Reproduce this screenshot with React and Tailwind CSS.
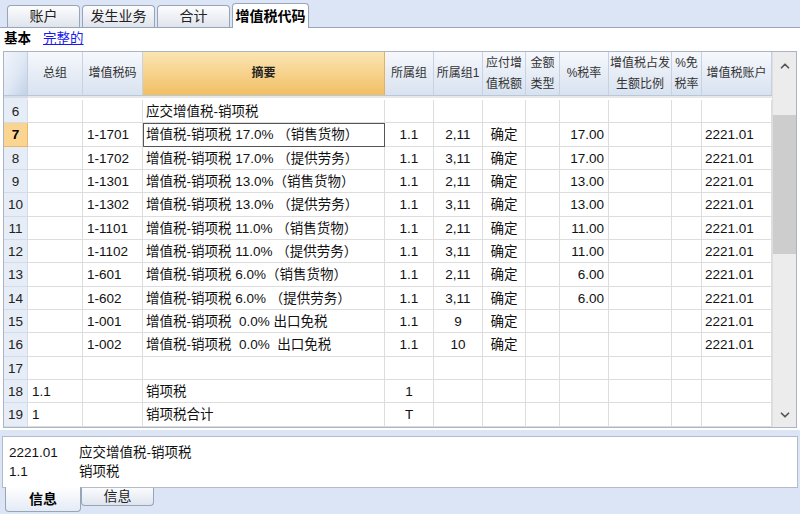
import React from "react";
import { ChevronUp, ChevronDown } from "lucide-react";

const W = [
  "w-[24px]",
  "w-[55px]",
  "w-[60px]",
  "w-[242px]",
  "w-[49px]",
  "w-[49px]",
  "w-[43px]",
  "w-[34px]",
  "w-[49px]",
  "w-[63px]",
  "w-[30px]",
  "w-[70px]",
];

const ALIGN = [
  "justify-start pl-[4px]",
  "justify-start pl-[4px]",
  "justify-start pl-[3px]",
  "justify-center",
  "justify-center",
  "justify-center",
  "justify-center",
  "justify-end pr-[4px]",
  "justify-end pr-[4px]",
  "justify-end pr-[4px]",
  "justify-start pl-[3px]",
];

const HEADERS = [
  "总组",
  "增值税码",
  "摘要",
  "所属组",
  "所属组1",
  "应付增\n值税额",
  "金额\n类型",
  "%税率",
  "增值税占发\n生额比例",
  "%免\n税率",
  "增值税账户",
];

const ROWS = [
  [6, "", "", "应交增值税-销项税", "", "", "", "", "", "", "", ""],
  [7, "", "1-1701", "增值税-销项税 17.0% （销售货物）", "1.1", "2,11", "确定", "", "17.00", "", "", "2221.01"],
  [8, "", "1-1702", "增值税-销项税 17.0% （提供劳务）", "1.1", "3,11", "确定", "", "17.00", "", "", "2221.01"],
  [9, "", "1-1301", "增值税-销项税 13.0%（销售货物）", "1.1", "2,11", "确定", "", "13.00", "", "", "2221.01"],
  [10, "", "1-1302", "增值税-销项税 13.0% （提供劳务）", "1.1", "3,11", "确定", "", "13.00", "", "", "2221.01"],
  [11, "", "1-1101", "增值税-销项税 11.0% （销售货物）", "1.1", "2,11", "确定", "", "11.00", "", "", "2221.01"],
  [12, "", "1-1102", "增值税-销项税 11.0% （提供劳务）", "1.1", "3,11", "确定", "", "11.00", "", "", "2221.01"],
  [13, "", "1-601", "增值税-销项税 6.0%（销售货物）", "1.1", "2,11", "确定", "", "6.00", "", "", "2221.01"],
  [14, "", "1-602", "增值税-销项税 6.0% （提供劳务）", "1.1", "3,11", "确定", "", "6.00", "", "", "2221.01"],
  [15, "", "1-001", "增值税-销项税  0.0% 出口免税", "1.1", "9", "确定", "", "", "", "", "2221.01"],
  [16, "", "1-002", "增值税-销项税  0.0%  出口免税", "1.1", "10", "确定", "", "", "", "", "2221.01"],
  [17, "", "", "", "", "", "", "", "", "", "", ""],
  [18, "1.1", "", "销项税", "1", "", "", "", "", "", "", ""],
  [19, "1", "", "销项税合计", "T", "", "", "", "", "", "", ""],
];

function TopTab({ label, active }) {
  if (active) {
    return (
      <div className="h-[25px] w-[77px] mt-[2px] flex items-center justify-center bg-white border border-b-0 border-[#98a5b8] rounded-t-[4px] font-bold text-[14px] text-black -mb-px relative z-10">
        {label}
      </div>
    );
  }
  return (
    <div className="h-[22px] w-[73px] flex items-center justify-center bg-gradient-to-b from-[#fdfdfe] to-[#dfe4ec] border border-b-0 border-[#98a5b8] rounded-t-[4px] text-[14px] text-[#222]">
      {label}
    </div>
  );
}

function HeaderRow() {
  return (
    <div className="flex h-[44px] border-b border-[#b9c7da]">
      <div className={`${W[0]} shrink-0 bg-gradient-to-br from-[#f1f5fb] via-[#e1e9f5] to-[#c3d2e7] border-r border-[#c3cfdf]`} />
      {HEADERS.map((h, i) => (
        <div
          key={i}
          className={`${W[i + 1]} shrink-0 flex items-center justify-center text-center whitespace-pre leading-[21px] text-[12px] border-r ${
            i === 2
              ? "bg-gradient-to-b from-[#fbe5b2] to-[#f1bf62] border-[#e3b160] font-bold text-[#222]"
              : "bg-gradient-to-b from-[#f6f8fc] to-[#d8e2f0] border-[#c6d2e2] text-[#333]"
          }`}
        >
          {h}
        </div>
      ))}
    </div>
  );
}

function BodyRow({ row }) {
  const [num, ...cells] = row;
  const sel = num === 7;
  return (
    <div className="flex h-[23.33px]">
      <div
        className={`${W[0]} shrink-0 flex items-center justify-center pt-[2px] text-[13.5px] border-r border-b ${
          sel ? "bg-[#fad591] border-[#e9b864] font-bold text-black" : "bg-[#e6edf7] border-[#d3dceb] text-[#222]"
        }`}
      >
        {num}
      </div>
      {cells.map((c, i) => (
        <div
          key={i}
          className={`${W[i + 1]} shrink-0 flex items-center pt-[2px] whitespace-pre overflow-hidden text-[13.5px] text-[#111] border-r border-b border-[#dddddd] ${ALIGN[i]} ${
            sel && i === 2 ? "outline outline-[1.5px] outline-[#555] -outline-offset-1 relative z-10" : ""
          }`}
        >
          {c}
        </div>
      ))}
    </div>
  );
}

function ScrollBar() {
  return (
    <div className="w-[24px] shrink-0 bg-[#ececec] flex flex-col border-l border-[#dedede]">
      <div className="h-[22px] flex items-center justify-center pt-[6px]">
        <ChevronUp size={14} strokeWidth={3} className="text-[#555]" />
      </div>
      <div className="h-[41px]" />
      <div className="h-[139px] bg-[#cdcdcd]" />
      <div className="flex-1" />
      <div className="h-[24px] flex items-center justify-center">
        <ChevronDown size={14} strokeWidth={3} className="text-[#555]" />
      </div>
    </div>
  );
}

export default function App() {
  return (
    <div className="w-[800px] h-[514px] overflow-hidden bg-[#dbe5f6] flex flex-col font-['Liberation_Sans','Noto_Sans_CJK_SC',sans-serif]">
      {/* top tabs */}
      <div className="h-[27px] flex items-end pl-[7px] gap-[2px] shrink-0">
        <TopTab label="账户" />
        <TopTab label="发生业务" />
        <TopTab label="合计" />
        <TopTab label="增值税代码" active />
      </div>

      {/* main panel */}
      <div className="h-[403px] shrink-0 bg-white border-t border-[#98a5b8] flex flex-col">
        <div className="h-[23px] flex items-center gap-[12px] pl-[4px] text-[13.5px]">
          <span className="font-bold text-black">基本</span>
          <span className="text-[#1a1aee] underline">完整的</span>
        </div>
        <div className="ml-[3px] w-[794px] h-[377px] border border-[#a9b4c4] flex">
          <div className="flex flex-col w-[768px] shrink-0">
            <HeaderRow />
            <div className="h-[4px] flex">
              <div className={`${W[0]} shrink-0 bg-[#e6edf7] border-t-2 border-[#d6dde8]`} />
              <div className="flex-1 border-t-2 border-[#e8e8e8]" />
            </div>
            {ROWS.map((r) => (
              <BodyRow key={r[0]} row={r} />
            ))}
          </div>
          <ScrollBar />
        </div>
      </div>

      <div className="h-[6px] shrink-0" />

      {/* info panel */}
      <div className="ml-[2px] w-[796px] h-[52px] shrink-0 bg-white border border-[#b4bcc8] px-[6px] pt-[6px] text-[13.5px] text-[#111] leading-[19px]">
        <div className="flex">
          <span className="w-[70px]">2221.01</span>
          <span>应交增值税-销项税</span>
        </div>
        <div className="flex">
          <span className="w-[70px]">1.1</span>
          <span>销项税</span>
        </div>
      </div>

      {/* bottom tabs */}
      <div className="flex items-start pl-[5px] shrink-0">
        <div className="h-[25px] w-[76px] -mt-px flex items-center justify-center bg-gradient-to-b from-white to-[#e4ebf6] border border-t-0 border-[#98a5b8] rounded-b-[4px] font-bold text-[14px] text-black">
          信息
        </div>
        <div className="h-[18px] w-[73px] flex items-center justify-center bg-gradient-to-b from-[#fafbfd] to-[#dfe5ee] border border-t-0 border-[#98a5b8] rounded-b-[4px] text-[14px] text-[#222]">
          信息
        </div>
      </div>
    </div>
  );
}
